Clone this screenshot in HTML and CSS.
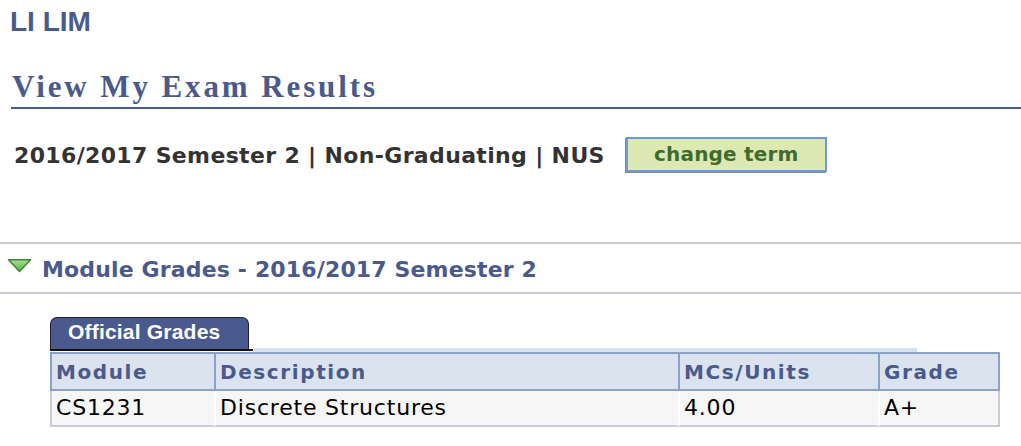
FILE: index.html
```html
<!DOCTYPE html>
<html lang="en">
<head>
<meta charset="utf-8">
<title>View My Exam Results</title>
<link rel="stylesheet" href="styles.css">
</head>
<body>
<div class="page">
  <h1 class="name">LI LIM</h1>
  <h2 class="title">View My Exam Results</h2>

  <div class="term-row">
    <span class="term">2016/2017 Semester 2 | Non-Graduating | NUS</span>
    <button class="btn" type="button">change term</button>
  </div>

  <div class="section-head">
    <svg class="toggle" width="25" height="15" viewBox="0 0 25 15" aria-hidden="true">
      <defs>
        <linearGradient id="tg" x1="0" y1="0" x2="0" y2="1">
          <stop offset="0" stop-color="#a6df92"/>
          <stop offset="1" stop-color="#5fb24c"/>
        </linearGradient>
      </defs>
      <path d="M1.5 1.8 H23.5 L12.5 13.5 Z" fill="url(#tg)" stroke="#3d8a33" stroke-width="1.6" stroke-linejoin="round"/>
    </svg>
    <span class="section-title">Module Grades - 2016/2017 Semester 2</span>
  </div>

  <div class="grid-area">
    <div class="tabbar">
      <div class="tab-wrap"><div class="tab">Official Grades</div></div>
      <div class="tab-strip"></div>
    </div>
    <table class="grades">
      <colgroup>
        <col class="c-mod">
        <col class="c-desc">
        <col class="c-mc">
        <col class="c-grade">
      </colgroup>
      <thead>
        <tr>
          <th>Module</th>
          <th>Description</th>
          <th>MCs/Units</th>
          <th class="last">Grade</th>
        </tr>
      </thead>
      <tbody>
        <tr>
          <td class="first">CS1231</td>
          <td>Discrete Structures</td>
          <td>4.00</td>
          <td class="last">A+</td>
        </tr>
      </tbody>
    </table>
  </div>
</div>
</body>
</html>
```

FILE: styles.css
```css
html, body {
  margin: 0;
  padding: 0;
  background: #ffffff;
}

body {
  font-family: "DejaVu Sans", Verdana, sans-serif;
  color: #333333;
}

.page {
  width: 1021px;
}

.name {
  margin: 0;
  padding: 6px 0 0 10px;
  font: bold 28px/31px "Liberation Sans", Arial, sans-serif;
  color: #4b5a8c;
}

.title {
  margin: 32px 0 0 11px;
  padding: 0 0 2px 1px;
  font: bold 31px/36px "Liberation Serif", "Times New Roman", serif;
  letter-spacing: 2.9px;
  color: #4b5a8c;
  border-bottom: 2px solid #4b5a8c;
}

.term-row {
  display: flex;
  align-items: flex-start;
  margin-top: 28px;
  padding-left: 14px;
}

.term {
  margin-top: 6px;
  font-weight: bold;
  font-size: 22px;
  line-height: 26px;
  letter-spacing: 0.35px;
  color: #333333;
}

.btn {
  box-sizing: border-box;
  width: 201px;
  height: 35px;
  margin-left: 21px;
  padding: 0;
  border: 2px solid #6a9bd7;
  background: #dde8b3;
  box-shadow: -1px 1px 0 #8a8a8a;
  font-family: "DejaVu Sans", Verdana, sans-serif;
  font-weight: bold;
  font-size: 20px;
  line-height: 31px;
  letter-spacing: 0.2px;
  color: #3f6c2c;
  text-align: center;
}

.section-head {
  display: flex;
  align-items: flex-start;
  margin-top: 70px;
  padding: 13px 0 9px 0;
  border-top: 2px solid #c6cad4;
  border-bottom: 2px solid #c6cad4;
}

.toggle {
  display: block;
  margin: 1px 0 0 7px;
  flex: none;
}

.section-title {
  margin-left: 10px;
  font-weight: bold;
  font-size: 22px;
  line-height: 26px;
  letter-spacing: 0.15px;
  color: #4b5a8c;
}

.grid-area {
  margin: 23px 0 0 50px;
}

.tabbar {
  display: flex;
  align-items: flex-end;
}

.tab-wrap {
  width: 203px;
  border-bottom: 2px solid #111111;
  margin-bottom: 1px;
}

.tab {
  box-sizing: border-box;
  width: 199px;
  height: 32px;
  padding-left: 17px;
  border: 1px solid #1f2230;
  border-bottom: none;
  border-radius: 7px 7px 0 0;
  background: #4a5a8e;
  font: bold 21px/28px "Liberation Sans", Arial, sans-serif;
  letter-spacing: 0.2px;
  color: #ffffff;
}

.tab-strip {
  width: 664px;
  height: 4px;
  background: #d8e1ee;
}

.grades {
  border-collapse: separate;
  border-spacing: 0;
  table-layout: fixed;
  width: 950px;
}

.c-mod { width: 164px; }
.c-desc { width: 464px; }
.c-mc { width: 200px; }
.c-grade { width: 122px; }

.grades th,
.grades td {
  box-sizing: border-box;
  text-align: left;
  vertical-align: top;
  white-space: nowrap;
}

.grades th {
  height: 39px;
  padding: 2px 4px 0 4px;
  background: #dbe3ef;
  border-top: 2px solid #8ba1c8;
  border-bottom: 2px solid #8ba1c8;
  border-left: 2px solid #8ba1c8;
  font-weight: bold;
  font-size: 20px;
  line-height: 33px;
  letter-spacing: 1.6px;
  color: #4a5a8a;
}

.grades th.last {
  border-right: 2px solid #8ba1c8;
}

.grades td {
  height: 36px;
  padding: 0 4px;
  background: #f6f6f6;
  border-left: 2px solid #ffffff;
  border-bottom: 2px solid #c8ccd6;
  font-size: 22px;
  line-height: 34px;
  letter-spacing: 0.8px;
  color: #000000;
}

.grades td.first {
  border-left: 2px solid #c8ccd6;
}

.grades td.last {
  border-right: 2px solid #c8ccd6;
}
```
